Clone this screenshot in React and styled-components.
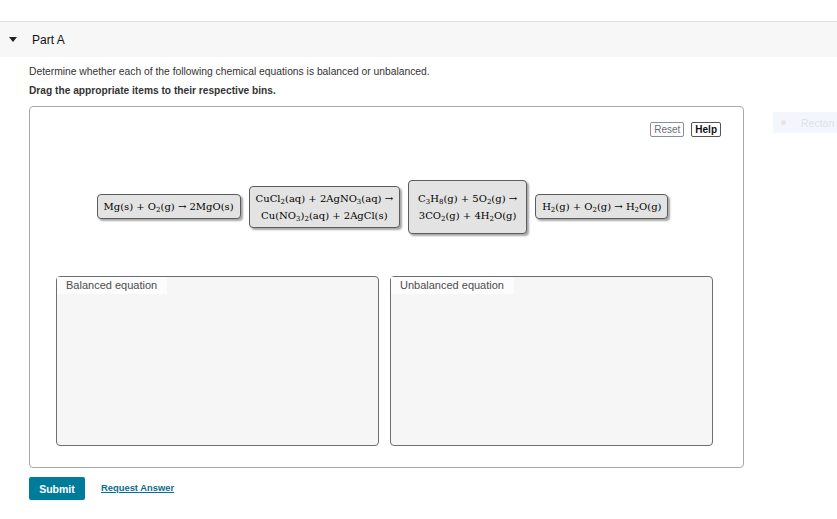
import React from "react";
import styled, { createGlobalStyle } from "styled-components";

const GlobalStyle = createGlobalStyle`
  html, body { margin: 0; padding: 0; overflow: hidden; background: #fff; }
  body { font-family: Arial, "Liberation Sans", sans-serif; color: #333; }
`;

const Page = styled.div`
  width: 837px;
  height: 519px;
  padding-top: 21px;
  box-sizing: border-box;
  overflow: hidden;
`;

const PartHeader = styled.div`
  display: flex;
  align-items: center;
  height: 36px;
  border-top: 1px solid #dedede;
  background: #f7f7f7;
  box-sizing: border-box;
  padding-left: 9px;
  gap: 15px;
`;

const Caret = styled.span`
  width: 0;
  height: 0;
  border-left: 4px solid transparent;
  border-right: 4px solid transparent;
  border-top: 5px solid #222;
`;

const PartTitle = styled.span`
  font-size: 12px;
  color: #111;
  font-weight: 500;
`;

const Body = styled.div`
  padding: 0 0 0 29px;
`;

const Prompt = styled.p`
  margin: 9px 0 0;
  font-size: 10.3px;
  color: #333;
  line-height: 12px;
`;

const Instruction = styled.p`
  margin: 7px 0 0;
  font-size: 10.2px;
  font-weight: bold;
  color: #333;
  line-height: 12px;
`;

const WorkRow = styled.div`
  display: flex;
  align-items: flex-start;
  margin-top: 9px;
`;

const DragArea = styled.div`
  flex: none;
  width: 715px;
  height: 362px;
  box-sizing: border-box;
  border: 1px solid #a9a9a9;
  border-radius: 4px;
  padding: 15px 22px 0 26px;
  display: flex;
  flex-direction: column;
`;

const ToolRow = styled.div`
  display: flex;
  justify-content: flex-end;
  gap: 7px;
`;

const ToolButton = styled.button`
  font-family: Arial, "Liberation Sans", sans-serif;
  font-size: 10px;
  line-height: 12px;
  padding: 0 3px;
  height: 15px;
  background: #fff;
  border: 1px solid ${(p) => (p.$strong ? "#555" : "#8a8f96")};
  border-radius: 2px;
  color: ${(p) => (p.$strong ? "#111" : "#6b6f75")};
  font-weight: ${(p) => (p.$strong ? "bold" : "normal")};
`;

const TileZone = styled.div`
  height: 139px;
  display: flex;
  align-items: center;
  justify-content: center;
  gap: 8px;
  padding-right: 12px;
`;

const Tile = styled.div`
  font-family: "DejaVu Serif", "Liberation Serif", serif;
  font-size: 10px;
  line-height: 17px;
  color: #000;
  background: #e3e3e3;
  border: 1px solid #5c5c5c;
  border-radius: 4px;
  box-shadow: 2px 2px 2px rgba(0, 0, 0, 0.35);
  padding: ${(p) => (p.$roomy ? "9px 9px" : "3px 6px")};
  text-align: center;
  white-space: nowrap;
`;

const Line = styled.div``;

const Sub = styled.sub`
  font-size: 7px;
  line-height: 0;
  vertical-align: -2px;
`;

const Bins = styled.div`
  display: flex;
  gap: 11px;
`;

const Bin = styled.div`
  width: 323px;
  height: 170px;
  box-sizing: border-box;
  border: 1px solid #6d6d72;
  border-radius: 4px;
  background: #f6f6f6;
  display: flex;
  align-items: flex-start;
`;

const BinLabel = styled.span`
  font-size: 11px;
  color: #4d4d4d;
  background: #fcfcfc;
  padding: 2px 10px 3px 9px;
  line-height: 12px;
  white-space: nowrap;
`;

const Ghost = styled.div`
  flex: 1;
  min-width: 0;
  margin-left: 29px;
  margin-top: 6px;
  display: flex;
  align-items: center;
  gap: 15px;
  height: 21px;
  padding-left: 8px;
  background: #f3f7fd;
  font-size: 10.5px;
  color: #dce1e8;
  white-space: nowrap;
  overflow: hidden;
`;

const GhostDot = styled.span`
  width: 5px;
  height: 5px;
  border-radius: 50%;
  background: #ece3e3;
  flex: none;
`;

const Actions = styled.div`
  display: flex;
  align-items: center;
  gap: 16px;
  margin-top: 9px;
`;

const Submit = styled.button`
  width: 56px;
  height: 23px;
  background: #007c9b;
  color: #fff;
  border: none;
  border-radius: 2px;
  font-family: Arial, "Liberation Sans", sans-serif;
  font-size: 10.5px;
  font-weight: bold;
  padding: 0;
`;

const RequestLink = styled.a`
  font-family: "Liberation Sans", Arial, sans-serif;
  font-size: 9.4px;
  font-weight: bold;
  color: #0a6f8c;
  text-decoration: underline;
  margin-top: -2px;
`;

const eq = (parts) =>
  parts.map((p, i) =>
    typeof p === "string" ? <React.Fragment key={i}>{p}</React.Fragment> : <Sub key={i}>{p[0]}</Sub>
  );

export default function App() {
  return (
    <>
      <GlobalStyle />
      <Page>
        <PartHeader>
          <Caret />
          <PartTitle>Part A</PartTitle>
        </PartHeader>
        <Body>
          <Prompt>Determine whether each of the following chemical equations is balanced or unbalanced.</Prompt>
          <Instruction>Drag the appropriate items to their respective bins.</Instruction>
          <WorkRow>
            <DragArea>
              <ToolRow>
                <ToolButton>Reset</ToolButton>
                <ToolButton $strong>Help</ToolButton>
              </ToolRow>
              <TileZone>
                <Tile>
                  <Line>{eq(["Mg(s) + O", ["2"], "(g) → 2MgO(s)"])}</Line>
                </Tile>
                <Tile>
                  <Line>{eq(["CuCl", ["2"], "(aq) + 2AgNO", ["3"], "(aq) →"])}</Line>
                  <Line>{eq(["Cu(NO", ["3"], ")", ["2"], "(aq) + 2AgCl(s)"])}</Line>
                </Tile>
                <Tile $roomy>
                  <Line>{eq(["C", ["3"], "H", ["8"], "(g) + 5O", ["2"], "(g) →"])}</Line>
                  <Line>{eq(["3CO", ["2"], "(g) + 4H", ["2"], "O(g)"])}</Line>
                </Tile>
                <Tile>
                  <Line>{eq(["H", ["2"], "(g) + O", ["2"], "(g) → H", ["2"], "O(g)"])}</Line>
                </Tile>
              </TileZone>
              <Bins>
                <Bin>
                  <BinLabel>Balanced equation</BinLabel>
                </Bin>
                <Bin>
                  <BinLabel>Unbalanced equation</BinLabel>
                </Bin>
              </Bins>
            </DragArea>
            <Ghost>
              <GhostDot />
              Rectan
            </Ghost>
          </WorkRow>
          <Actions>
            <Submit>Submit</Submit>
            <RequestLink href="#">Request Answer</RequestLink>
          </Actions>
        </Body>
      </Page>
    </>
  );
}
